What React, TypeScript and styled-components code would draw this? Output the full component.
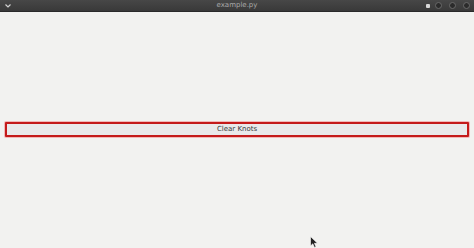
import React from "react";
import styled, { createGlobalStyle } from "styled-components";

const GlobalStyle = createGlobalStyle`
  html, body {
    margin: 0;
    padding: 0;
    background: #f2f2f0;
  }
  #root {
    height: 248px;
  }
`;

const Window = styled.div`
  position: relative;
  width: 474px;
  height: 248px;
  display: flex;
  flex-direction: column;
  background: #f2f2f0;
  font-family: "DejaVu Sans", "Liberation Sans", sans-serif;
  overflow: hidden;
`;

const TitleBar = styled.div`
  height: 11px;
  flex: none;
  display: grid;
  grid-template-columns: 70px 1fr 70px;
  align-items: center;
  background: linear-gradient(#474747, #393939);
  border-bottom: 1px solid #2a2a2a;
`;

const Title = styled.div`
  text-align: center;
  color: #a9a9a9;
  font-size: 7px;
  line-height: 11px;
`;

const LeftControls = styled.div`
  display: flex;
  align-items: center;
  padding-left: 5px;
`;

const RightControls = styled.div`
  display: flex;
  align-items: center;
  justify-content: flex-end;
  gap: 7px;
  padding-right: 4px;
`;

const Dot = styled.span<{ $light?: boolean }>`
  width: ${(p) => (p.$light ? 4 : 7)}px;
  height: ${(p) => (p.$light ? 4 : 7)}px;
  margin-right: ${(p) => (p.$light ? -2 : 0)}px;
  box-sizing: border-box;
  border-radius: ${(p) => (p.$light ? "1px" : "50%")};
  background: ${(p) => (p.$light ? "#d8d8d8" : "#2b2b2b")};
  border: ${(p) => (p.$light ? "none" : "1.5px solid #6a6a6a")};
`;

const Body = styled.div`
  flex: 1;
  display: flex;
  flex-direction: column;
  justify-content: center;
  padding: 0 5px 0 5px;
  padding-bottom: 2px;
`;

const Button = styled.button`
  height: 15px;
  width: 100%;
  box-sizing: border-box;
  border: 2px solid #c41a1a;
  border-radius: 1px;
  background: #e9e9ea;
  color: #3a3a3a;
  font-family: "DejaVu Sans", "Liberation Sans", sans-serif;
  font-size: 7px;
  line-height: 10px;
  padding: 0;
  box-shadow: 0 0 0 1px #f1b8b8;
`;

const Cursor = styled.svg`
  position: absolute;
  left: 310px;
  top: 236px;
`;

export default function App() {
  return (
    <>
      <GlobalStyle />
      <Window>
        <TitleBar>
          <LeftControls>
            <svg width="6" height="4" viewBox="0 0 6 4">
              <path d="M0.5 0.5 L3 3 L5.5 0.5" stroke="#d0d0d0" strokeWidth="1.2" fill="none" />
            </svg>
          </LeftControls>
          <Title>example.py</Title>
          <RightControls>
            <Dot $light />
            <Dot />
            <Dot />
            <Dot />
          </RightControls>
        </TitleBar>
        <Body>
          <Button>Clear Knots</Button>
        </Body>
        <Cursor width="8" height="12" viewBox="0 0 8 12">
          <path d="M0.5 0.5 L0.5 10 L2.8 7.8 L4.5 11.5 L6 10.8 L4.4 7.3 L7.5 7.3 Z" fill="#222" stroke="#fff" strokeWidth="0.6" />
        </Cursor>
      </Window>
    </>
  );
}
